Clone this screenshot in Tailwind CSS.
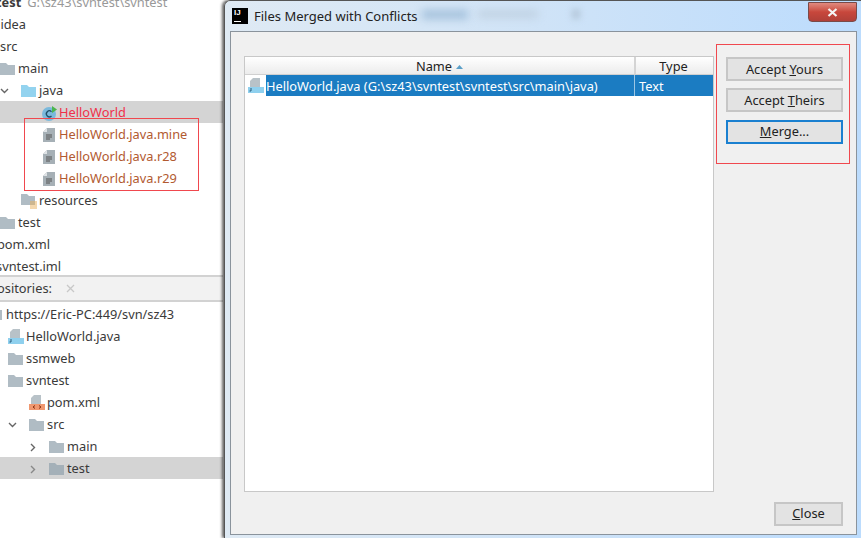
<!DOCTYPE html>
<html lang="en">
<head>
<meta charset="UTF-8">
<title>Files Merged with Conflicts</title>
<script src="https://cdn.jsdelivr.net/npm/@tailwindcss/browser@4"></script>
</head>
<body class="bg-white">
<div class="relative w-[861px] h-[538px] overflow-hidden font-['Noto_Sans',sans-serif] text-[12.800px] text-[#3a3a3a] bg-white">

  <!-- left: project tree -->
  <div class="w-[223px] h-full overflow-hidden">
    <div class="-ml-[20px] -mt-[9px] w-[243px]">
      <div class="h-[22px] pt-[2px] flex items-center pl-0 -ml-[6px] whitespace-nowrap"><b class="font-bold">svntest</b><span class="ml-[6px] text-[#999]">G:\sz43\svntest\svntest</span></div>
      <div class="h-[22px] pt-[2px] flex items-center pl-[17px]">.idea</div>
      <div class="h-[22px] pt-[2px] flex items-center pl-[20px]">src</div>
      <div class="h-[22px] pt-[2px] flex items-center pl-[20px] gap-[3px]">
        <svg class="w-[15px] h-[12px]" viewBox="0 0 15 12"><path d="M0 0h6l2 2h7v10H0z" fill="#b0bcc4"/></svg><span>main</span>
      </div>
      <div class="h-[22px] pt-[2px] flex items-center pl-[20px]">
        <svg class="w-[9px] h-[6px]" viewBox="0 0 9 6"><path d="M1 1l3.500 3.500L8 1" fill="none" stroke="#666" stroke-width="1.400"/></svg>
        <svg class="ml-[12px] w-[15px] h-[12px]" viewBox="0 0 15 12"><path d="M0 0h6l2 2h7v10H0z" fill="#93d3ef"/></svg><span class="ml-[3px]">java</span>
      </div>
      <div class="h-[22px] pt-[2px] flex items-center pl-[61px] bg-[#d4d4d4] text-[#f0304a]">
        <svg class="w-[17px] h-[17px]" viewBox="0 0 17 17"><circle cx="8" cy="9" r="7" fill="#7ab9dc"/><path d="M10.500 6.700A3 3 0 1 0 10.500 11" fill="none" stroke="#1f4f68" stroke-width="1.300"/><path d="M11 1l5 3.500-5 3.500z" fill="#4bb54b"/></svg><span class="ml-[1px]">HelloWorld</span>
      </div>
      <div class="h-[22px] pt-[2px] flex items-center pl-[63px] text-[#b25a30]">
        <svg class="w-[12px] h-[14px]" viewBox="0 0 12 14"><path d="M4 0h8v14H0V4z" fill="#a6b0b6"/><path d="M4 0v4H0z" fill="#dfe3e6"/><path d="M3 7h6M3 9h6M3 11h4" stroke="#555" stroke-width="1"/></svg><span class="ml-[4px]">HelloWorld.java.mine</span>
      </div>
      <div class="h-[22px] pt-[2px] flex items-center pl-[63px] text-[#b25a30]">
        <svg class="w-[12px] h-[14px]" viewBox="0 0 12 14"><path d="M4 0h8v14H0V4z" fill="#a6b0b6"/><path d="M4 0v4H0z" fill="#dfe3e6"/><path d="M3 7h6M3 9h6M3 11h4" stroke="#555" stroke-width="1"/></svg><span class="ml-[4px]">HelloWorld.java.r28</span>
      </div>
      <div class="h-[22px] pt-[2px] flex items-center pl-[63px] text-[#b25a30]">
        <svg class="w-[12px] h-[14px]" viewBox="0 0 12 14"><path d="M4 0h8v14H0V4z" fill="#a6b0b6"/><path d="M4 0v4H0z" fill="#dfe3e6"/><path d="M3 7h6M3 9h6M3 11h4" stroke="#555" stroke-width="1"/></svg><span class="ml-[4px]">HelloWorld.java.r29</span>
      </div>
      <div class="h-[22px] pt-[2px] flex items-center pl-[41px]">
        <svg class="w-[17px] h-[15px]" viewBox="0 0 17 15"><path d="M0 0h6l2 2h6v9H0z" fill="#b0bcc4"/><path d="M9 8h7M9 10h7M9 12h7M9 14h7" stroke="#e8b05c" stroke-width="1"/></svg><span class="ml-[1px]">resources</span>
      </div>
      <div class="h-[22px] pt-[2px] flex items-center pl-[20px]">
        <svg class="w-[15px] h-[12px]" viewBox="0 0 15 12"><path d="M0 0h6l2 2h7v10H0z" fill="#b0bcc4"/></svg><span class="ml-[3px]">test</span>
      </div>
      <div class="h-[22px] pt-[2px] flex items-center pl-[17px]">pom.xml</div>
      <div class="h-[22px] pt-[2px] flex items-center pl-[16px]">svntest.iml</div>
    </div>

    <!-- repositories toolbar -->
    <div class="h-[27px] -mt-[2px] border-y-2 border-[#d2d2d2] bg-[#f2f2f2] flex items-center">
      <span class="-ml-[26px]">Repositories:</span>
      <svg class="ml-[14px] w-[9px] h-[9px]" viewBox="0 0 9 9"><path d="M1 1l7 7M8 1l-7 7" stroke="#c8c8c8" stroke-width="1.300"/></svg>
    </div>

    <!-- svn tree -->
    <div class="-ml-[20px] mt-[1px] w-[243px]">
      <div class="h-[22px] pt-[2px] flex items-center pl-[20px]">
        <span class="w-[2px] h-[10px] bg-[#b0bcc4]"></span><span class="ml-[4px]">https://Eric-PC:449/svn/sz43</span>
      </div>
      <div class="h-[22px] pt-[2px] flex items-center pl-[28px]">
        <svg class="w-[16px] h-[16px]" viewBox="0 0 16 16"><path d="M5 0h7v9H2V3z" fill="#b8c2c8"/><rect y="9" width="16" height="6" fill="#8fd0ee"/><path d="M3 10v3H1.500" fill="none" stroke="#2a5a78"/></svg><span class="ml-[2px]">HelloWorld.java</span>
      </div>
      <div class="h-[22px] pt-[2px] flex items-center pl-[28px]">
        <svg class="w-[15px] h-[12px]" viewBox="0 0 15 12"><path d="M0 0h6l2 2h7v10H0z" fill="#b0bcc4"/></svg><span class="ml-[3px]">ssmweb</span>
      </div>
      <div class="h-[22px] pt-[2px] flex items-center pl-[28px]">
        <svg class="w-[15px] h-[12px]" viewBox="0 0 15 12"><path d="M0 0h6l2 2h7v10H0z" fill="#b0bcc4"/></svg><span class="ml-[3px]">svntest</span>
      </div>
      <div class="h-[22px] pt-[2px] flex items-center pl-[49px]">
        <svg class="w-[16px] h-[16px]" viewBox="0 0 16 16"><path d="M5 0h7v9H2V3z" fill="#b8c2c8"/><rect y="9" width="16" height="6" fill="#f09870"/><path d="M6 10.500L4 12l2 1.500M10 10.500L12 12l-2 1.500" fill="none" stroke="#8a3010"/></svg><span class="ml-[2px]">pom.xml</span>
      </div>
      <div class="h-[22px] pt-[2px] flex items-center pl-[28px]">
        <svg class="w-[9px] h-[6px]" viewBox="0 0 9 6"><path d="M1 1l3.500 3.500L8 1" fill="none" stroke="#666" stroke-width="1.400"/></svg>
        <svg class="ml-[12px] w-[15px] h-[12px]" viewBox="0 0 15 12"><path d="M0 0h6l2 2h7v10H0z" fill="#b0bcc4"/></svg><span class="ml-[3px]">src</span>
      </div>
      <div class="h-[22px] pt-[2px] flex items-center pl-[50px]">
        <svg class="w-[6px] h-[9px]" viewBox="0 0 6 9"><path d="M1 1l3.500 3.500L1 8" fill="none" stroke="#666" stroke-width="1.400"/></svg>
        <svg class="ml-[13px] w-[15px] h-[12px]" viewBox="0 0 15 12"><path d="M0 0h6l2 2h7v10H0z" fill="#b0bcc4"/></svg><span class="ml-[3px]">main</span>
      </div>
      <div class="h-[22px] pt-[2px] flex items-center pl-[50px] bg-[#d4d4d4]">
        <svg class="w-[6px] h-[9px]" viewBox="0 0 6 9"><path d="M1 1l3.500 3.500L1 8" fill="none" stroke="#888" stroke-width="1.400"/></svg>
        <svg class="ml-[13px] w-[15px] h-[12px]" viewBox="0 0 15 12"><path d="M0 0h6l2 2h7v10H0z" fill="#a4b0b8"/></svg><span class="ml-[3px]">test</span>
      </div>
    </div>
  </div>

  <!-- red note around the revision files -->
  <div class="absolute left-[24px] top-[118px] w-[175px] h-[73px] border border-[#f0484e]"></div>

  <!-- dialog window -->
  <div class="absolute left-[224px] top-0 w-[637px] h-[538px] flex flex-col bg-gradient-to-r from-[#dfeaf4] via-[#cfe3f7] to-[#bcdcfd] border-l border-t border-[#555] rounded-tl-[6px] shadow-[-2px_0_3px_rgba(0,0,0,0.6)] pr-[4px] pb-[3px]">
    <div class="h-[30px] shrink-0 flex items-start pl-[7px] pt-[7px] text-[#222]">
      <div class="relative w-[16px] h-[16px] bg-black text-white font-bold text-[8px] leading-[10px] pl-[2px] font-['Liberation_Sans',sans-serif]">IJ<span class="absolute left-[2px] bottom-[2px] w-[7px] h-px bg-white"></span></div>
      <span class="ml-[6px] w-[162px] leading-[16px] text-[13px] whitespace-nowrap">Files Merged with Conflicts</span>
      <span class="ml-[6px] mt-[2px] w-[46px] h-[9px] bg-[#8fb0d0]/70 blur-[4px]"></span>
      <span class="ml-[10px] mt-[2px] w-[60px] h-[8px] bg-[#b6c6d6]/60 blur-[4px]"></span>
      <span class="ml-[34px] mt-[1px] w-[8px] h-[10px] bg-[#a9bccd]/70 blur-[3px]"></span>
      <div class="ml-auto -mt-[6px] w-[49px] h-[20px] rounded-b-[4px] border border-[#7a4a48] bg-gradient-to-b from-[#e08a80] via-[#c8473c] to-[#b04038] flex items-center justify-center">
        <svg class="w-[11px] h-[9px]" viewBox="0 0 11 9"><path d="M1.500 1l8 7M9.500 1l-8 7" stroke="#f4f4f4" stroke-width="2.200"/></svg>
      </div>
    </div>

    <div class="flex-1 min-h-0 ml-[5px] bg-[#f0f0f0] border border-[#8a939c] relative flex pl-[13px] pt-[24px] pr-[13px]">
      <!-- conflicts table -->
      <div class="w-[470px] h-[436px] bg-white border border-[#c8c8c8]">
        <div class="h-[18px] flex bg-gradient-to-b from-white to-[#ececec] border-b border-[#d0d0d0] text-[#222]">
          <div class="w-[389px] pt-[2px] flex items-center justify-center">Name<svg class="ml-[4px] w-[7px] h-[4px]" viewBox="0 0 7 4"><path d="M3.500 0L7 4H0z" fill="#5a9fc8"/></svg></div>
          <div class="flex-1 pt-[2px] border-l-2 border-[#d4d4d4] flex items-center justify-center pr-[2px]">Type</div>
        </div>
        <div class="h-[21px] flex text-white">
          <div class="w-[21px] bg-white flex items-center justify-center">
            <svg class="w-[16px] h-[16px]" viewBox="0 0 16 16"><path d="M5 0h7v9H2V3z" fill="#b8c2c8"/><rect y="9" width="16" height="6" fill="#8fd0ee"/><path d="M3 10v3H1.500" fill="none" stroke="#2a5a78"/></svg>
          </div>
          <div class="w-[368px] pt-[2px] bg-[#1b7cc2] flex items-center whitespace-nowrap">HelloWorld.java (G:\sz43\svntest\svntest\src\main\java)</div>
          <div class="flex-1 pt-[2px] bg-[#1b7cc2] border-l border-[#9cc6e4] flex items-center pl-[4px]">Text</div>
        </div>
      </div>

      <!-- action buttons -->
      <div class="ml-[12px] pt-[1px] w-[117px] flex flex-col text-[#222]">
        <button class="h-[24px] pt-[1px] border-2 border-[#c6c6c6] bg-[#e3e3e3] text-center">Accept <u>Y</u>ours</button>
        <button class="mt-[7px] h-[24px] pt-[1px] border-2 border-[#c6c6c6] bg-[#e3e3e3] text-center">Accept <u>T</u>heirs</button>
        <button class="mt-[8px] h-[24px] border-2 border-[#1a80d0] bg-[#e3e3e3] text-center"><u>M</u>erge...</button>
      </div>

      <button class="absolute left-[543px] bottom-[8px] w-[69px] h-[24px] border-2 border-[#c6c6c6] bg-[#e3e3e3] text-[#222] text-center"><u>C</u>lose</button>

      <!-- red note around the buttons -->
      <div class="absolute left-[485px] top-[12px] w-[134px] h-[120px] border border-[#f0484e]"></div>
    </div>
  </div>
</div>
</body>
</html>
